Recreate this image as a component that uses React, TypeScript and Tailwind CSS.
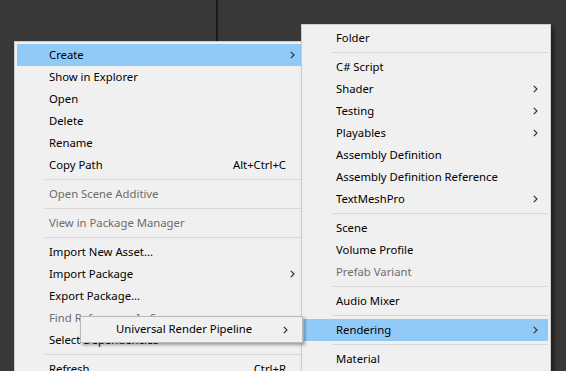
import React from "react";

type Item =
  | { sep: true }
  | {
      sep?: false;
      label: string;
      shortcut?: string;
      sub?: boolean;
      disabled?: boolean;
      active?: boolean;
    };

const leftItems: Item[] = [
  { label: "Create", sub: true, active: true },
  { label: "Show in Explorer" },
  { label: "Open" },
  { label: "Delete" },
  { label: "Rename" },
  { label: "Copy Path", shortcut: "Alt+Ctrl+C" },
  { sep: true },
  { label: "Open Scene Additive", disabled: true },
  { sep: true },
  { label: "View in Package Manager", disabled: true },
  { sep: true },
  { label: "Import New Asset..." },
  { label: "Import Package", sub: true },
  { label: "Export Package..." },
  { label: "Find References In Scene", disabled: true },
  { label: "Select Dependencies" },
  { sep: true },
  { label: "Refresh", shortcut: "Ctrl+R" },
];

const rightItems: Item[] = [
  { label: "Folder" },
  { sep: true },
  { label: "C# Script" },
  { label: "Shader", sub: true },
  { label: "Testing", sub: true },
  { label: "Playables", sub: true },
  { label: "Assembly Definition" },
  { label: "Assembly Definition Reference" },
  { label: "TextMeshPro", sub: true },
  { sep: true },
  { label: "Scene" },
  { label: "Volume Profile" },
  { label: "Prefab Variant", disabled: true },
  { sep: true },
  { label: "Audio Mixer" },
  { sep: true },
  { label: "Rendering", sub: true, active: true },
  { sep: true },
  { label: "Material" },
];

function Chevron() {
  return (
    <svg width="5" height="8" viewBox="0 0 5 8" className="shrink-0">
      <path d="M0.8 0.8 L4 4 L0.8 7.2" fill="none" stroke="#333" strokeWidth="1.2" />
    </svg>
  );
}

function MenuRow({ item }: { item: Item }) {
  if (item.sep) {
    return (
      <div className="h-[7px] flex items-center pl-[28px]">
        <div className="h-px w-full bg-[#d7d7d7]" />
      </div>
    );
  }
  return (
    <div
      className={`h-[22px] flex items-center pl-[32px] pr-[10px] ${
        item.active ? "bg-[#91c9f7]" : ""
      } ${item.disabled ? "text-[#6d6d6d]" : "text-black"}`}
    >
      <span className="flex-1 whitespace-nowrap">{item.label}</span>
      {item.shortcut && <span className="mr-[9px] whitespace-nowrap">{item.shortcut}</span>}
      {item.sub && <Chevron />}
    </div>
  );
}

function Menu({ items, className }: { items: Item[]; className: string }) {
  return (
    <div
      className={`absolute bg-[#f0f0f0] border border-[#cccccc] p-[2px] shadow-[3px_3px_4px_rgba(0,0,0,0.45)] ${className}`}
    >
      {items.map((it, i) => (
        <MenuRow key={i} item={it} />
      ))}
    </div>
  );
}

export default function App() {
  return (
    <div
      className="relative w-[566px] h-[371px] overflow-hidden bg-[#383838] text-[11.3px]"
      style={{ fontFamily: '"Noto Sans", "Open Sans", sans-serif' }}
    >
      <div className="absolute left-[216px] top-0 w-[2px] h-[60px] bg-[#1c1c1c]" />
      <Menu items={leftItems} className="left-[14px] top-[41px] w-[294px]" />
      <Menu items={rightItems} className="left-[301px] top-[24px] w-[250px]" />
      <div className="absolute left-[80px] top-[316px] w-[223px] bg-[#f0f0f0] border border-[#b9b9b9] p-[2px] shadow-[2px_2px_3px_rgba(0,0,0,0.35)]">
        <div className="h-[21px] flex items-center pl-[33px] pr-[12px] text-black">
          <span className="flex-1 whitespace-nowrap">Universal Render Pipeline</span>
          <Chevron />
        </div>
      </div>
    </div>
  );
}
